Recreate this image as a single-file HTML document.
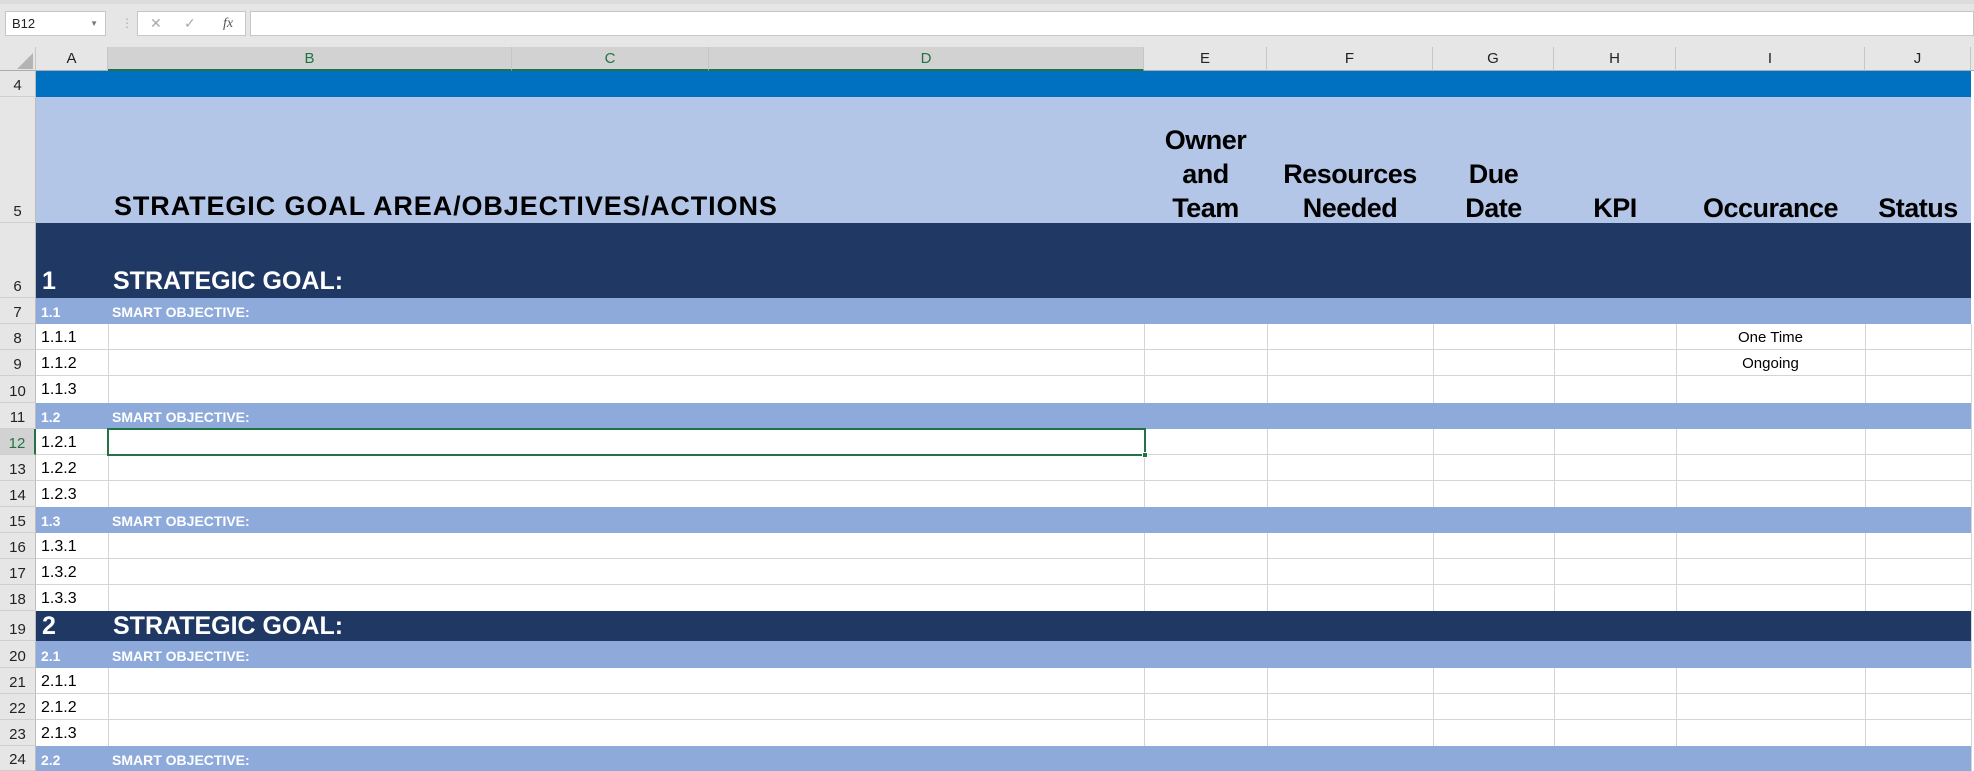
<!DOCTYPE html>
<html><head><meta charset="utf-8"><style>
*{margin:0;padding:0;box-sizing:border-box}
body{width:1974px;height:771px;overflow:hidden;background:#fff;position:relative;font-family:"Liberation Sans",sans-serif}
.a{position:absolute}
.rh{position:absolute;left:0;width:36px;background:#e6e6e6;border-right:1px solid #bcbcbc;border-bottom:1px solid #cfcfcf;font-size:15px;color:#222;text-align:center;display:flex;align-items:flex-end;justify-content:center;padding-bottom:2px}
.ch{position:absolute;top:47px;height:24px;background:#e6e6e6;border-right:1px solid #c6c6c6;border-bottom:1px solid #ababab;font-size:15px;color:#222;text-align:center;line-height:23px}
.vl{position:absolute;top:324px;height:447px;width:1px;background:#d4d4d4}
.hl{position:absolute;left:36px;width:1935px;height:1px;background:#d4d4d4}
.band{position:absolute;left:36px;width:1935px}
.lt{background:#8eaadb;color:#fff;font-weight:bold;font-size:14px}
.dk{background:#1f3864;color:#fff;font-weight:bold;font-size:25px}
.num{position:absolute;left:41px;font-size:16px;color:#000}
.hd{position:absolute;top:99px;height:126px;display:flex;flex-direction:column;justify-content:flex-end;align-items:center;font-weight:bold;font-size:27px;line-height:34px;padding-bottom:0;text-align:center;color:#000;white-space:nowrap;letter-spacing:-0.5px}
</style></head><body>
<div class="a" style="left:0;top:0;width:1974px;height:47px;background:#e6e6e6"></div>
<div class="a" style="left:0;top:0;width:1974px;height:4px;background:#dcdcdc"></div>
<div class="a" style="left:5px;top:11px;width:101px;height:25px;background:#fff;border:1px solid #c6c6c6;font-size:13px;line-height:23px;padding-left:6px;color:#222">B12<span style="position:absolute;right:7px;top:0;font-size:8px;color:#777">▼</span></div>
<div class="a" style="left:121px;top:16px;color:#aaa;font-size:12px">⋮</div>
<div class="a" style="left:137px;top:11px;width:109px;height:25px;background:#fff;border:1px solid #c6c6c6;font-size:14px;color:#aaa;line-height:23px"><span style="position:absolute;left:12px">✕</span><span style="position:absolute;left:46px">✓</span><span style="position:absolute;left:85px;color:#555;font-style:italic;font-family:'Liberation Serif',serif">fx</span></div>
<div class="a" style="left:250px;top:11px;width:1724px;height:25px;background:#fff;border:1px solid #c6c6c6"></div>
<div class="a" style="left:0;top:47px;width:36px;height:24px;background:#e6e6e6;border-right:1px solid #c6c6c6;border-bottom:1px solid #ababab"></div>
<svg class="a" style="left:14px;top:50px" width="20" height="20"><polygon points="19,3 19,19 3,19" fill="#b4b4b4"/></svg>
<div class="ch" style="left:36px;width:72px">A</div>
<div class="ch" style="left:108px;width:404px;background:#d2d2d2;color:#217346;border-bottom:2px solid #217346">B</div>
<div class="ch" style="left:512px;width:197px;background:#d2d2d2;color:#217346;border-bottom:2px solid #217346">C</div>
<div class="ch" style="left:709px;width:435px;background:#d2d2d2;color:#217346;border-bottom:2px solid #217346">D</div>
<div class="ch" style="left:1144px;width:123px">E</div>
<div class="ch" style="left:1267px;width:166px">F</div>
<div class="ch" style="left:1433px;width:121px">G</div>
<div class="ch" style="left:1554px;width:122px">H</div>
<div class="ch" style="left:1676px;width:189px">I</div>
<div class="ch" style="left:1865px;width:106px">J</div>
<div class="ch" style="left:1971px;width:3px;border-right:none"></div>
<div class="rh" style="top:71px;height:26px">4</div>
<div class="rh" style="top:97px;height:126px">5</div>
<div class="rh" style="top:223px;height:75px">6</div>
<div class="rh" style="top:298px;height:26px">7</div>
<div class="rh" style="top:324px;height:26px">8</div>
<div class="rh" style="top:350px;height:26px">9</div>
<div class="rh" style="top:376px;height:27px">10</div>
<div class="rh" style="top:403px;height:26px">11</div>
<div class="rh" style="top:429px;height:26px;background:#d2d2d2;color:#217346;border-right:2px solid #217346">12</div>
<div class="rh" style="top:455px;height:26px">13</div>
<div class="rh" style="top:481px;height:26px">14</div>
<div class="rh" style="top:507px;height:26px">15</div>
<div class="rh" style="top:533px;height:26px">16</div>
<div class="rh" style="top:559px;height:26px">17</div>
<div class="rh" style="top:585px;height:26px">18</div>
<div class="rh" style="top:611px;height:30px">19</div>
<div class="rh" style="top:641px;height:27px">20</div>
<div class="rh" style="top:668px;height:26px">21</div>
<div class="rh" style="top:694px;height:26px">22</div>
<div class="rh" style="top:720px;height:26px">23</div>
<div class="rh" style="top:746px;height:25px">24</div>
<div class="vl" style="left:108px"></div>
<div class="vl" style="left:1144px"></div>
<div class="vl" style="left:1267px"></div>
<div class="vl" style="left:1433px"></div>
<div class="vl" style="left:1554px"></div>
<div class="vl" style="left:1676px"></div>
<div class="vl" style="left:1865px"></div>
<div class="vl" style="left:1971px"></div>
<div class="hl" style="top:349px"></div><div class="hl" style="top:375px"></div>
<div class="hl" style="top:454px"></div><div class="hl" style="top:480px"></div>
<div class="hl" style="top:558px"></div><div class="hl" style="top:584px"></div>
<div class="hl" style="top:693px"></div><div class="hl" style="top:719px"></div>
<div class="band" style="top:71px;height:26px;background:#0070c0"></div>
<div class="band" style="top:97px;height:126px;background:#b4c6e7"></div>
<div class="a" style="left:114px;top:191px;font-size:27px;font-weight:bold;color:#000;white-space:nowrap;letter-spacing:0.9px">STRATEGIC GOAL AREA/OBJECTIVES/ACTIONS</div>
<div class="hd" style="left:1144px;width:123px"><div>Owner</div><div>and</div><div>Team</div></div>
<div class="hd" style="left:1267px;width:166px"><div>Resources</div><div>Needed</div></div>
<div class="hd" style="left:1433px;width:121px"><div>Due</div><div>Date</div></div>
<div class="hd" style="left:1554px;width:122px"><div>KPI</div></div>
<div class="hd" style="left:1676px;width:189px"><div>Occurance</div></div>
<div class="hd" style="left:1865px;width:106px"><div>Status</div></div>
<div class="band dk" style="top:223px;height:75px"><span class="a" style="left:6px;bottom:2px">1</span><span class="a" style="left:77px;bottom:2px">STRATEGIC GOAL:</span></div>
<div class="band lt" style="top:298px;height:26px"><span class="a" style="left:5px;bottom:4px">1.1</span><span class="a" style="left:76px;bottom:4px">SMART OBJECTIVE:</span></div>
<div class="band lt" style="top:403px;height:26px"><span class="a" style="left:5px;bottom:4px">1.2</span><span class="a" style="left:76px;bottom:4px">SMART OBJECTIVE:</span></div>
<div class="band lt" style="top:507px;height:26px"><span class="a" style="left:5px;bottom:4px">1.3</span><span class="a" style="left:76px;bottom:4px">SMART OBJECTIVE:</span></div>
<div class="band dk" style="top:611px;height:30px"><span class="a" style="left:6px;bottom:0px">2</span><span class="a" style="left:77px;bottom:0px">STRATEGIC GOAL:</span></div>
<div class="band lt" style="top:641px;height:27px"><span class="a" style="left:5px;bottom:4px">2.1</span><span class="a" style="left:76px;bottom:4px">SMART OBJECTIVE:</span></div>
<div class="band lt" style="top:746px;height:25px"><span class="a" style="left:5px;bottom:3px">2.2</span><span class="a" style="left:76px;bottom:3px">SMART OBJECTIVE:</span></div>
<div class="num" style="top:329px">1.1.1</div>
<div class="num" style="top:355px">1.1.2</div>
<div class="num" style="top:381px">1.1.3</div>
<div class="num" style="top:434px">1.2.1</div>
<div class="num" style="top:460px">1.2.2</div>
<div class="num" style="top:486px">1.2.3</div>
<div class="num" style="top:538px">1.3.1</div>
<div class="num" style="top:564px">1.3.2</div>
<div class="num" style="top:590px">1.3.3</div>
<div class="num" style="top:673px">2.1.1</div>
<div class="num" style="top:699px">2.1.2</div>
<div class="num" style="top:725px">2.1.3</div>
<div class="a" style="left:1676px;top:329px;width:189px;text-align:center;font-size:15px">One Time</div>
<div class="a" style="left:1676px;top:355px;width:189px;text-align:center;font-size:15px">Ongoing</div>
<div class="a" style="left:107px;top:428px;width:1039px;height:28px;border:2px solid #217346"></div>
<div class="a" style="left:1142px;top:452px;width:6px;height:6px;background:#217346;border:1px solid #fff"></div>
</body></html>
